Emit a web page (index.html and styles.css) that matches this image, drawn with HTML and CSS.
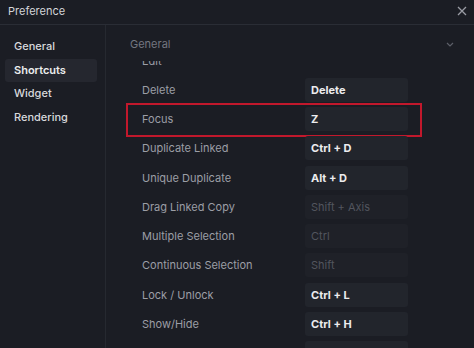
FILE: index.html
```html
<!DOCTYPE html>
<html lang="en">
<head>
    <meta charset="UTF-8">
    <title>Preference</title>
    <link rel="stylesheet" href="styles.css">
</head>
<body>
    <div class="window">
        <div class="titlebar">
            <span class="title">Preference</span>
            <svg class="close" width="10" height="10" viewBox="0 0 10 10">
                <path d="M1 1L9 9M9 1L1 9" stroke="#9a9ca4" stroke-width="1.3" fill="none"/>
            </svg>
        </div>
        <div class="body">
            <div class="sidebar">
                <div class="nav-item">General</div>
                <div class="nav-item active">Shortcuts</div>
                <div class="nav-item">Widget</div>
                <div class="nav-item">Rendering</div>
            </div>
            <div class="main">
                <div class="section-head">
                    <span>General</span>
                    <svg class="chevron" width="8" height="5" viewBox="0 0 8 5">
                        <path d="M1 1L4 4L7 1" stroke="#5c5f68" stroke-width="1.2" fill="none"/>
                    </svg>
                </div>
                <div class="scroll">
                    <div class="list">
                        <div class="row"><span class="label">Edit</span><span class="key none"></span></div>
                        <div class="row"><span class="label">Delete</span><span class="key">Delete</span></div>
                        <div class="row focused"><span class="label">Focus</span><span class="key">Z</span></div>
                        <div class="row"><span class="label">Duplicate Linked</span><span class="key">Ctrl + D</span></div>
                        <div class="row"><span class="label">Unique Duplicate</span><span class="key">Alt + D</span></div>
                        <div class="row"><span class="label">Drag Linked Copy</span><span class="key empty">Shift + Axis</span></div>
                        <div class="row"><span class="label">Multiple Selection</span><span class="key empty">Ctrl</span></div>
                        <div class="row"><span class="label">Continuous Selection</span><span class="key empty">Shift</span></div>
                        <div class="row"><span class="label">Lock / Unlock</span><span class="key">Ctrl + L</span></div>
                        <div class="row"><span class="label">Show/Hide</span><span class="key">Ctrl + H</span></div>
                        <div class="row"><span class="label"></span><span class="key"></span></div>
                    </div>
                </div>
            </div>
        </div>
    </div>
</body>
</html>
```

FILE: styles.css
```css
body {
    margin: 0;
    padding: 0;
    background: #1b1d24;
    font-family: Inter, "Noto Sans", sans-serif;
    font-size: 11px;
    color: #d6d7db;
    overflow: hidden;
}

.window {
    height: 348px;
    display: flex;
    flex-direction: column;
}

.titlebar {
    height: 25px;
    flex: none;
    display: flex;
    align-items: center;
    justify-content: space-between;
    padding: 0 7px 3px 8px;
    box-sizing: border-box;
    border-bottom: 1px solid #2a2d35;
}

.title {
    color: #d2d4d8;
}

.body {
    flex: 1;
    display: flex;
    min-height: 0;
}

.sidebar {
    width: 105px;
    flex: none;
    border-right: 1px solid #262930;
    padding-top: 10px;
}

.nav-item {
    height: 23.5px;
    line-height: 23.5px;
    width: 92px;
    margin-left: 5px;
    padding-left: 9px;
    box-sizing: border-box;
    border-radius: 3px;
    color: #d8d9dc;
    font-weight: 500;
}

.nav-item.active {
    background: #25272f;
    color: #eceded;
    font-weight: 600;
}

.main {
    flex: 1;
    display: flex;
    flex-direction: column;
    min-width: 0;
}

.section-head {
    display: flex;
    justify-content: space-between;
    align-items: center;
    padding: 12px 20px 0 24px;
    height: 14px;
    color: #737680;
}

.scroll {
    margin-top: 10px;
    flex: 1;
    overflow: hidden;
    position: relative;
}

.list {
    margin-top: -15px;
    padding-left: 20px;
    width: 296px;
}

.row {
    position: relative;
    height: 29.25px;
    display: flex;
    align-items: center;
    justify-content: space-between;
    padding: 0 14px 0 16px;
}

.label {
    color: #9c9ea6;
}

.key {
    width: 103px;
    height: 24px;
    line-height: 24px;
    padding-left: 6px;
    box-sizing: border-box;
    background: #22252c;
    border-radius: 3px;
    color: #ececee;
    font-weight: 700;
}

.key.empty {
    color: #52555e;
    font-weight: 400;
    background: #1f2128;
}

.key.none {
    background: transparent;
}

.focused::after {
    content: "";
    position: absolute;
    left: 0;
    right: 0;
    top: -2px;
    bottom: -3px;
    border: 2px solid #c2182c;
}
```
